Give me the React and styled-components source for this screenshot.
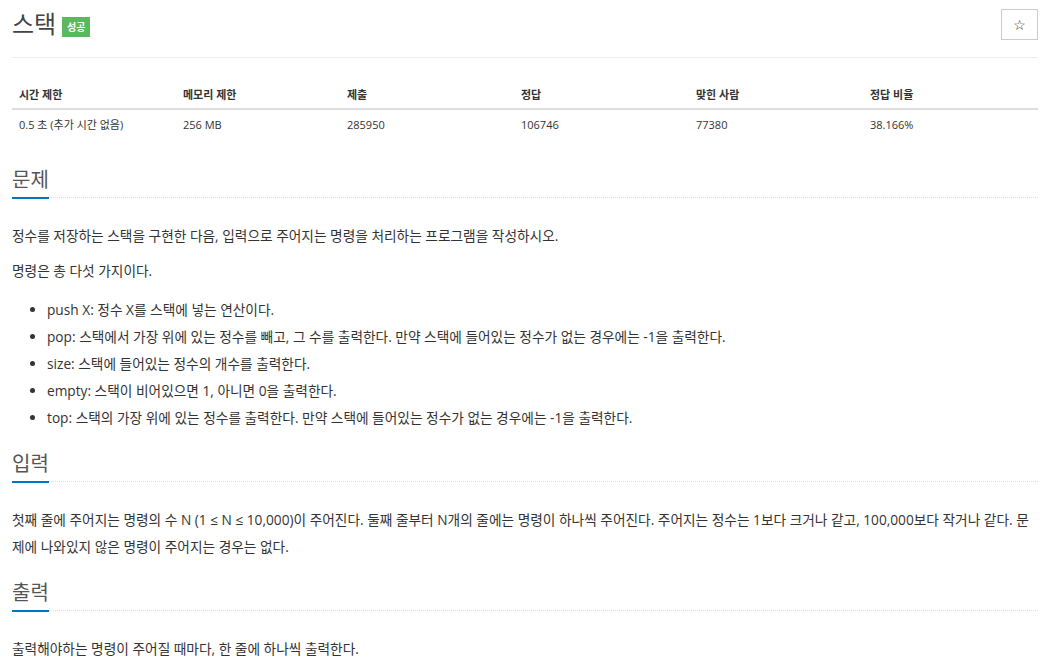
import React from 'react';
import styled, { createGlobalStyle } from 'styled-components';

const GlobalStyle = createGlobalStyle`
  body {
    margin: 0;
    background: #fff;
    font-family: "Open Sans", "Noto Sans CJK KR", sans-serif;
    color: #333;
  }
`;

const Page = styled.div`
  padding: 0 8px 0 12px;
`;

const TitleBar = styled.div`
  display: flex;
  align-items: center;
  justify-content: space-between;
  height: 57px;
  border-bottom: 1px solid #eee;
`;

const TitleGroup = styled.div`
  display: flex;
  align-items: center;
  gap: 6px;
`;

const Title = styled.h1`
  margin: 0;
  font-size: 24px;
  font-weight: 400;
  color: #444;
  line-height: 1;
  padding-bottom: 9px;
`;

const Badge = styled.span`
  display: inline-flex;
  align-items: center;
  justify-content: center;
  width: 28px;
  height: 20px;
  background: #5cb85c;
  color: #fff;
  font-size: 10px;
  font-weight: 700;
  margin-top: -4px;
`;

const StarButton = styled.button`
  width: 37px;
  height: 31px;
  border: 1px solid #ccc;
  background: #fff;
  color: #333;
  font-size: 14px;
  padding: 0;
  margin-bottom: 8px;
  font-family: "DejaVu Sans", sans-serif;
`;

const InfoTable = styled.table`
  width: 100%;
  table-layout: fixed;
  border-collapse: collapse;
  margin-top: 20px;
  font-size: 11px;
`;

const Th = styled.th`
  box-sizing: border-box;
  text-align: left;
  font-weight: 700;
  padding: 8px 7px 6px;
  border-bottom: 2px solid #ddd;
  width: ${p => p.$w}px;
`;

const Td = styled.td`
  padding: 6px 7px 8px;
`;

const Section = styled.section`
  margin-top: ${p => p.$top || 22}px;
`;

const Headline = styled.div`
  border-bottom: 1px dotted #ddd;
  margin-bottom: 24px;
`;

const H2 = styled.h2`
  display: inline-block;
  margin: 0 0 -2px 0;
  padding-bottom: 6px;
  font-size: 20px;
  font-weight: 400;
  line-height: 22px;
  color: #555;
  border-bottom: 2px solid #0076c0;
`;

const P = styled.p`
  margin: 0 0 8px;
  font-size: 13.7px;
  line-height: 27px;
  word-break: break-all;
`;

const List = styled.ul`
  margin: 12px 0 10px;
  padding-left: 35px;
  font-size: 13.7px;
  line-height: 27px;
`;

const cols = [
  ['시간 제한', '0.5 초 (추가 시간 없음)', 164],
  ['메모리 제한', '256 MB', 164],
  ['제출', '285950', 174],
  ['정답', '106746', 175],
  ['맞힌 사람', '77380', 174],
  ['정답 비율', '38.166%', 175],
];

export default function App() {
  return (
    <>
      <GlobalStyle />
      <Page>
        <TitleBar>
          <TitleGroup>
            <Title>스택</Title>
            <Badge>성공</Badge>
          </TitleGroup>
          <StarButton>☆</StarButton>
        </TitleBar>

        <InfoTable>
          <thead>
            <tr>
              {cols.map(c => <Th key={c[0]} $w={c[2]}>{c[0]}</Th>)}
            </tr>
          </thead>
          <tbody>
            <tr>
              {cols.map(c => <Td key={c[0]}>{c[1]}</Td>)}
            </tr>
          </tbody>
        </InfoTable>

        <Section $top={29}>
          <Headline><H2>문제</H2></Headline>
          <P>정수를 저장하는 스택을 구현한 다음, 입력으로 주어지는 명령을 처리하는 프로그램을 작성하시오.</P>
          <P>명령은 총 다섯 가지이다.</P>
          <List>
            <li>push X: 정수 X를 스택에 넣는 연산이다.</li>
            <li>pop: 스택에서 가장 위에 있는 정수를 빼고, 그 수를 출력한다. 만약 스택에 들어있는 정수가 없는 경우에는 -1을 출력한다.</li>
            <li>size: 스택에 들어있는 정수의 개수를 출력한다.</li>
            <li>empty: 스택이 비어있으면 1, 아니면 0을 출력한다.</li>
            <li>top: 스택의 가장 위에 있는 정수를 출력한다. 만약 스택에 들어있는 정수가 없는 경우에는 -1을 출력한다.</li>
          </List>
        </Section>

        <Section>
          <Headline><H2>입력</H2></Headline>
          <P>첫째 줄에 주어지는 명령의 수 N (1 ≤ N ≤ 10,000)이 주어진다. 둘째 줄부터 N개의 줄에는 명령이 하나씩 주어진다. 주어지는 정수는 1보다 크거나 같고, 100,000보다 작거나 같다. 문제에 나와있지 않은 명령이 주어지는 경우는 없다.</P>
        </Section>

        <Section>
          <Headline><H2>출력</H2></Headline>
          <P>출력해야하는 명령이 주어질 때마다, 한 줄에 하나씩 출력한다.</P>
        </Section>
      </Page>
    </>
  );
}
